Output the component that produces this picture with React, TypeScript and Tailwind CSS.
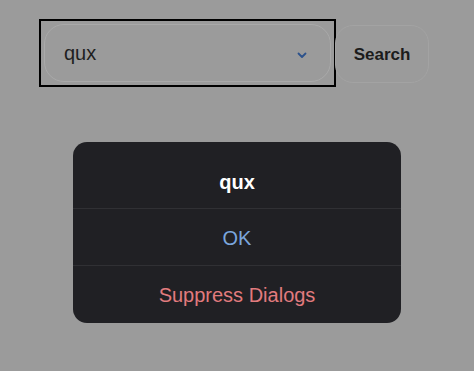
const App = () => {
    return (
        <div
            className="w-[474px] h-[371px] bg-[#9b9b9b] pt-[19px] overflow-hidden"
            style={{ fontFamily: '"Liberation Sans", Arial, sans-serif' }}
        >
            {/* Search row */}
            <div className="flex items-start pl-[39px]">
                <div className="border-2 border-black p-[3px]">
                    <div className="flex items-center justify-between w-[287px] h-[58px] rounded-[20px] border border-[#a9a9a9] pl-[19px] pr-[23px]">
                        <span className="text-[20px] text-[#1f1f1f]">qux</span>
                        <svg width="10" height="7" viewBox="0 0 10 7" className="mt-[4px]">
                            <polyline
                                points="1.5,1.5 5,5 8.5,1.5"
                                fill="none"
                                stroke="#2c528c"
                                strokeWidth="1.8"
                                strokeLinecap="round"
                                strokeLinejoin="round"
                            />
                        </svg>
                    </div>
                </div>
                <button className="-ml-px mt-[6px] w-[94px] h-[58px] rounded-[18px] border border-[#a3a3a3] text-[17px] font-bold text-[#1c1c1c] pt-[2px]">
                    Search
                </button>
            </div>

            {/* Alert dialog */}
            <div className="mx-auto mt-[55px] w-[328px] rounded-[14px] bg-[#202024] overflow-hidden">
                <div className="h-[66px] pt-[28px] text-center text-[20px] font-bold leading-[24px] text-white">
                    qux
                </div>
                <div className="h-[57px] flex items-center justify-center border-t border-[#303034] text-[20px] text-[#7aa6dd] pt-[2px]">
                    OK
                </div>
                <div className="h-[58px] flex items-center justify-center border-t border-[#303034] text-[20px] text-[#e27b7e]">
                    Suppress Dialogs
                </div>
            </div>
        </div>
    );
};

export default App;
